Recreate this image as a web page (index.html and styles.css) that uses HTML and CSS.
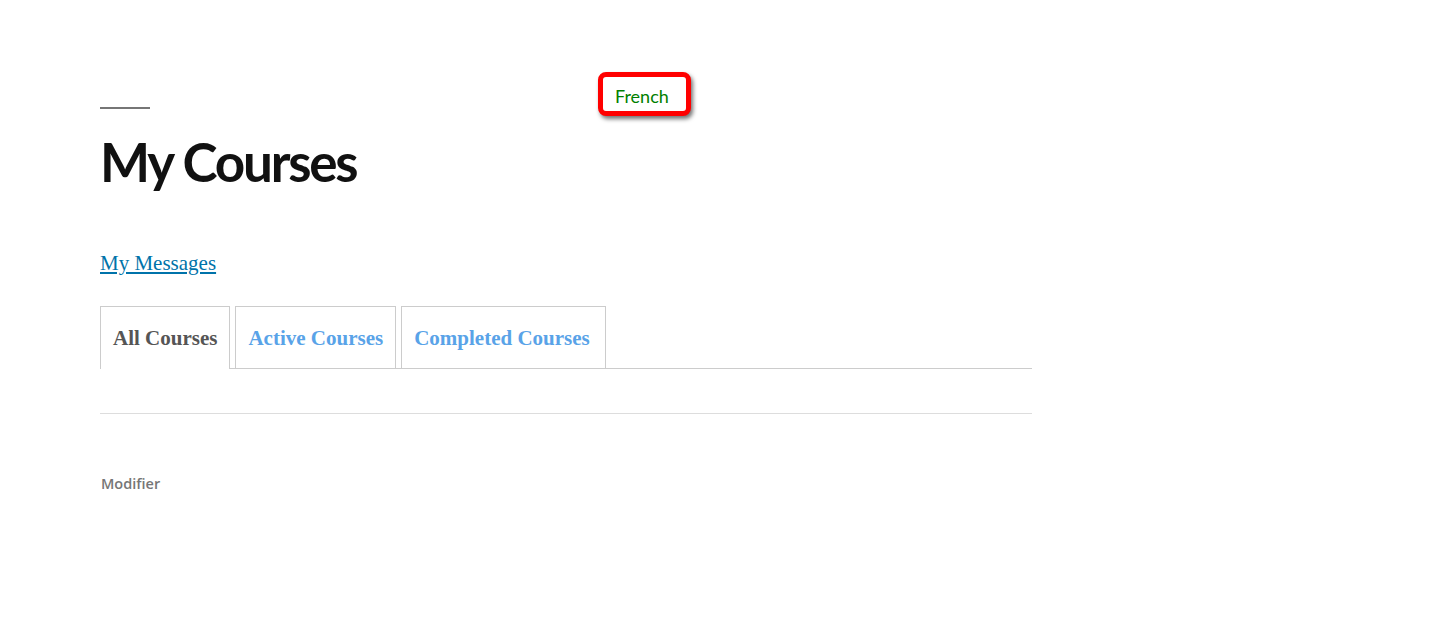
FILE: index.html
```html
<!DOCTYPE html>
<html lang="en">
<head>
<meta charset="utf-8">
<title>My Courses</title>
<link rel="stylesheet" href="styles.css">
</head>
<body>
<div class="lang-badge">French</div>
<main class="page">
  <header class="entry-header">
    <hr class="rule">
    <h1 class="title">My Courses</h1>
  </header>
  <p class="messages"><a href="#">My Messages</a></p>
  <ul class="tabs">
    <li class="tab active"><a href="#">All Courses</a></li>
    <li class="tab"><a href="#">Active Courses</a></li>
    <li class="tab"><a href="#">Completed Courses</a></li>
  </ul>
  <div class="tab-content"></div>
  <div class="edit-link">Modifier</div>
</main>
</body>
</html>
```
FILE: styles.css
```css
html, body {
  margin: 0;
  padding: 0;
  background: #fff;
}
body {
  font-family: "Open Sans", "Noto Sans", sans-serif;
  color: #111;
}
.lang-badge {
  position: absolute;
  left: 598px;
  top: 72px;
  border: 5px solid #ff0000;
  border-radius: 8px;
  background: #fff;
  box-shadow: 2px 3px 4px rgba(0, 0, 0, 0.55);
  color: #008000;
  font-family: Lato, "Open Sans", sans-serif;
  font-size: 18px;
  line-height: 22px;
  padding: 8px 17px 4px 12px;
}
.page {
  width: 932px;
  padding: 0 0 0 100px;
}
.entry-header {
  padding-top: 107px;
}
.rule {
  width: 50px;
  height: 2px;
  margin: 0;
  border: 0;
  background: #767676;
}
.title {
  margin: 21px 0 0;
  font-family: Lato, "Open Sans", sans-serif;
  font-size: 53px;
  font-weight: 700;
  line-height: 64px;
  letter-spacing: -2.2px;
  color: #111;
}
.messages {
  margin: 57px 0 0;
  font-family: "Liberation Serif", "Times New Roman", serif;
  font-size: 21px;
  line-height: 24px;
}
.messages a {
  color: #0073aa;
  text-decoration: underline;
}
.tabs {
  list-style: none;
  margin: 31px 0 0;
  padding: 0;
  display: flex;
  gap: 5px;
  border-bottom: 1px solid #cccccc;
}
.tab {
  border: 1px solid #cccccc;
  border-bottom: 0;
  padding: 19px 12px 18px;
  font-family: "Liberation Serif", "Times New Roman", serif;
  font-weight: 700;
  font-size: 21px;
  line-height: 24px;
}
.tab a {
  color: #59a3e8;
  text-decoration: none;
}
.tab:last-child {
  padding-right: 15px;
}
.tab.active {
  margin-bottom: -1px;
  padding-bottom: 19px;
  background: #fff;
}
.tab.active a {
  color: #555555;
}
.tab-content {
  height: 44px;
  border-bottom: 1px solid #dddddd;
}
.edit-link {
  margin-top: 60px;
  font-family: "Open Sans", "Noto Sans", sans-serif;
  font-size: 14.5px;
  font-weight: 600;
  color: #767676;
  padding-left: 1px;
}
```
